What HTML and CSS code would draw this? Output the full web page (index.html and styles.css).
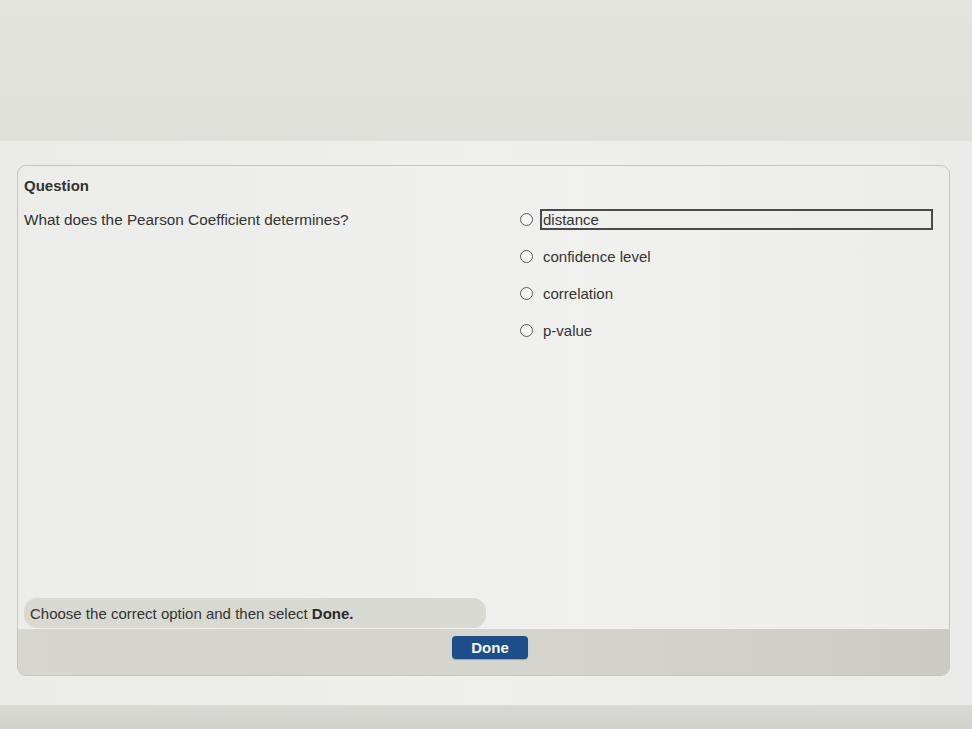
FILE: index.html
```
<!DOCTYPE html>
<html>
<head>
<meta charset="utf-8">
<link rel="stylesheet" href="styles.css">
</head>
<body>
<div class="topband"></div>
<main class="page">
  <section class="card">
    <div class="content">
      <h1 class="title">Question</h1>
      <div class="qrow">
        <p class="qtext">What does the Pearson Coefficient determines?</p>
        <ul class="options">
          <li class="option"><span class="radio"></span><span class="label focused">distance</span></li>
          <li class="option"><span class="radio"></span><span class="label">confidence level</span></li>
          <li class="option"><span class="radio"></span><span class="label">correlation</span></li>
          <li class="option"><span class="radio"></span><span class="label">p-value</span></li>
        </ul>
      </div>
      <div class="hint">Choose the correct option and then select <b>Done.</b></div>
    </div>
    <footer class="footer">
      <button class="done">Done</button>
    </footer>
  </section>
</main>
<div class="bottomband"></div>
</body>
</html>
```
FILE: styles.css
```
html, body {
  margin: 0;
  padding: 0;
}
body {
  width: 972px;
  height: 729px;
  overflow: hidden;
  background: #eaeae7;
  font-family: "Liberation Sans", Arial, sans-serif;
  color: #333331;
}
.topband {
  height: 141px;
  background: linear-gradient(180deg, #e4e4df 0%, #e0e0da 100%);
}
.page {
  height: 564px;
  padding: 24px 0 0 17px;
  box-sizing: border-box;
  background: linear-gradient(90deg, #ebebe8 0%, #efefed 50%, #ebebe9 100%);
}
.card {
  width: 933px;
  height: 511px;
  box-sizing: border-box;
  border: 1px solid #c6c6c1;
  border-radius: 9px;
  background: linear-gradient(90deg, #ececea 0%, #f0f0ee 60%, #ededeb 100%);
  display: flex;
  flex-direction: column;
  overflow: hidden;
}
.content {
  flex: 1;
  display: flex;
  flex-direction: column;
  padding: 11px 16px 1px 6px;
}
.title {
  margin: 0;
  font-size: 15px;
  line-height: 17px;
  font-weight: bold;
}
.qrow {
  display: flex;
  margin-top: 15px;
}
.qtext {
  margin: 0;
  width: 496px;
  font-size: 15.3px;
  line-height: 21px;
}
.options {
  list-style: none;
  margin: 0;
  padding: 0;
  flex: 1;
  display: flex;
  flex-direction: column;
  gap: 16px;
}
.option {
  display: flex;
  align-items: center;
  gap: 7px;
  font-size: 15px;
  line-height: 17px;
}
.radio {
  width: 11px;
  height: 11px;
  border: 1.8px solid #5a5a58;
  border-radius: 50%;
  background: #f6f6f4;
  flex: none;
}
.label {
  flex: 1;
  border: 2px solid transparent;
  padding: 0 1px;
}
.label.focused {
  border-color: #4a4a4a;
}
.hint {
  margin-top: auto;
  width: 462px;
  height: 30px;
  box-sizing: border-box;
  padding: 7px 6px 0;
  background: #d9d9d3;
  border-radius: 13px;
  font-size: 15px;
  line-height: 17px;
}
.hint b {
  color: #2a2a2a;
}
.footer {
  height: 46px;
  flex: none;
  background: linear-gradient(90deg, #d6d6cf 0%, #d5d5cd 60%, #cbcbc3 100%);
  display: flex;
  justify-content: center;
  align-items: flex-start;
  padding-left: 13px;
}
.done {
  margin-top: 7px;
  width: 76px;
  height: 23px;
  border: none;
  border-radius: 4px;
  background: #1d4e88;
  color: #f4f6fa;
  font-family: "Liberation Sans", Arial, sans-serif;
  font-weight: bold;
  font-size: 15px;
  padding: 0;
  box-shadow: 0 1px 1px rgba(0,0,0,0.25);
}
.bottomband {
  height: 24px;
  background: linear-gradient(180deg, #d9d9d4 0%, #d3d3ce 100%);
}
```
